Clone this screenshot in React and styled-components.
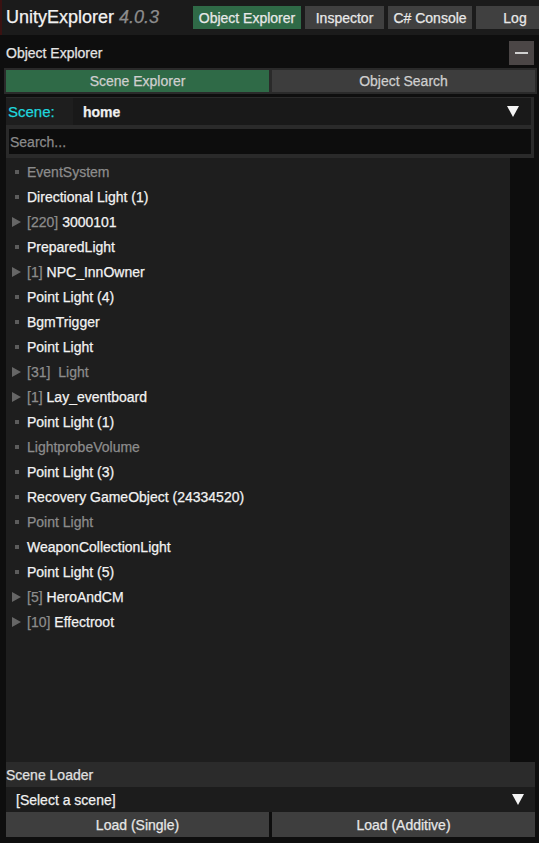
import React from "react"
import styled, { createGlobalStyle } from "styled-components"

const Global = createGlobalStyle`
  html, body {
    margin: 0;
    padding: 0;
    background: #0d0d0d;
  }
  * {
    box-sizing: border-box;
  }
`

const Window = styled.div`
  width: 539px;
  height: 843px;
  background: #0e0e0e;
  display: flex;
  flex-direction: column;
  overflow: hidden;
  font-family: "Liberation Sans", Arial, sans-serif;
  font-size: 14px;
  color: #e6e6e6;
  -webkit-text-stroke: 0.25px;
`

const TitleBar = styled.div`
  height: 35px;
  flex: none;
  display: flex;
  align-items: center;
  background: #1b1b1b;
  border-left: 2px solid #3a1212;
  padding-left: 4px;
`

const Title = styled.div`
  font-size: 18px;
  color: #f2f2f2;
  flex: 1;
  white-space: nowrap;
  .version {
    font-style: italic;
    color: #8c8c8c;
    margin-left: 5px;
  }
`

const NavButtons = styled.div`
  display: flex;
  gap: 4px;
  margin-right: -15px;
`

const NavButton = styled.div`
  height: 23px;
  width: ${p => p.$w}px;
  background: ${p => (p.$active ? "#2f6a47" : "#404040")};
  color: #e8e8e8;
  display: flex;
  align-items: center;
  justify-content: center;
  white-space: nowrap;
`

const Body = styled.div`
  flex: 1;
  display: flex;
  flex-direction: column;
  padding: 0 5px 6px 6px;
  min-height: 0;
`

const PanelHeader = styled.div`
  height: 33px;
  flex: none;
  display: flex;
  align-items: center;
  justify-content: space-between;
  color: #e4e4e4;
  padding-top: 2px;
`

const MinButton = styled.div`
  width: 25px;
  height: 24px;
  background: #4b4646;
  display: flex;
  align-items: center;
  justify-content: center;
  &::after {
    content: "";
    width: 13px;
    height: 2px;
    background: #d0d0d0;
  }
`

const Tabs = styled.div`
  height: 26px;
  flex: none;
  display: flex;
  gap: 3px;
  background: #2a2a2a;
  padding: 2px;
  margin: 0 -3px 0 -2px;
`

const Tab = styled.div`
  flex: 1;
  background: ${p => (p.$active ? "#2f6a47" : "#3d3d3d")};
  color: #cfcfcf;
  display: flex;
  align-items: center;
  justify-content: center;
`

const SceneBox = styled.div`
  margin-top: 3px;
  flex: none;
  background: #2a2a2a;
  padding: 1px 3px 4px 0;
`

const SceneRow = styled.div`
  height: 27px;
  display: flex;
  background: #1e1e1e;
`

const SceneLabel = styled.div`
  width: 67px;
  padding-left: 2px;
  color: #1fd6de;
  display: flex;
  align-items: center;
  font-size: 15px;
`

const Dropdown = styled.div`
  flex: 1;
  display: flex;
  align-items: center;
  justify-content: space-between;
  background: ${p => p.$bg || "#191919"};
  padding: 0 ${p => p.$pr || 12}px 0 ${p => p.$pl || 10}px;
  color: #f0f0f0;
  font-weight: ${p => (p.$bold ? "bold" : "normal")};
`

const DownArrow = styled.span`
  width: 0;
  height: 0;
  border-left: 6px solid transparent;
  border-right: 6px solid transparent;
  border-top: 11px solid #f4f4f4;
`

const SearchInput = styled.input`
  display: block;
  width: calc(100% - 3px);
  margin: 4px 0 0 3px;
  height: 25px;
  border: none;
  outline: none;
  background: #0d0d0d;
  color: #ddd;
  font-family: inherit;
  font-size: 14px;
  padding: 0 1px;
  &::placeholder {
    color: #8a8a8a;
  }
`

const ListArea = styled.div`
  flex: 1;
  display: flex;
  min-height: 0;
  margin-right: -1px;
`

const List = styled.div`
  flex: 1;
  background: #1e1e1e;
  padding-top: 1px;
  overflow: hidden;
`

const Scrollbar = styled.div`
  width: 25px;
  background: #0d0d0d;
`

const Row = styled.div`
  height: 25px;
  display: flex;
  align-items: center;
  white-space: nowrap;
  color: ${p => (p.$inactive ? "#8c8c8c" : "#f2f2f2")};
`

const Marker = styled.span`
  width: 21px;
  flex: none;
  display: flex;
  align-items: center;
  justify-content: ${p => (p.$arrow ? "flex-start" : "center")};
  padding-left: ${p => (p.$arrow ? "6px" : "0")};
  &::before {
    content: "";
    ${p =>
      p.$arrow
        ? `border-top: 5px solid transparent;
           border-bottom: 5px solid transparent;
           border-left: 9px solid #666;`
        : `width: 4px; height: 4px; background: #5c5c5c; margin-left: 1px;`}
  }
`

const Count = styled.span`
  color: #8c8c8c;
  margin-right: 4px;
`

const LoaderHeader = styled.div`
  height: 25px;
  flex: none;
  background: #2b2b2b;
  display: flex;
  align-items: center;
  color: #e0e0e0;
  margin-right: -1px;
`

const LoaderSelect = styled.div`
  height: 25px;
  flex: none;
  display: flex;
  margin-right: -1px;
`

const LoadButtons = styled.div`
  height: 25px;
  flex: none;
  display: flex;
  gap: 3px;
  margin-right: -1px;
`

const LoadButton = styled.div`
  flex: 1;
  background: #3e3e3e;
  color: #e6e6e6;
  display: flex;
  align-items: center;
  justify-content: center;
`

const items = [
  { name: "EventSystem", inactive: true },
  { name: "Directional Light (1)" },
  { name: "3000101", count: 220 },
  { name: "PreparedLight" },
  { name: "NPC_InnOwner", count: 1 },
  { name: "Point Light (4)" },
  { name: "BgmTrigger" },
  { name: "Point Light" },
  { name: "\u00a0Light", count: 31, inactive: true },
  { name: "Lay_eventboard", count: 1 },
  { name: "Point Light (1)" },
  { name: "LightprobeVolume", inactive: true },
  { name: "Point Light (3)" },
  { name: "Recovery GameObject (24334520)" },
  { name: "Point Light", inactive: true },
  { name: "WeaponCollectionLight" },
  { name: "Point Light (5)" },
  { name: "HeroAndCM", count: 5 },
  { name: "Effectroot", count: 10 },
]

export default function App() {
  return (
    <Window>
      <Global />
      <TitleBar>
        <Title>
          UnityExplorer<span className="version">4.0.3</span>
        </Title>
        <NavButtons>
          <NavButton $w={108} $active>Object Explorer</NavButton>
          <NavButton $w={79}>Inspector</NavButton>
          <NavButton $w={84}>C# Console</NavButton>
          <NavButton $w={78}>Log</NavButton>
        </NavButtons>
      </TitleBar>
      <Body>
        <PanelHeader>
          <span>Object Explorer</span>
          <MinButton />
        </PanelHeader>
        <Tabs>
          <Tab $active>Scene Explorer</Tab>
          <Tab>Object Search</Tab>
        </Tabs>
        <SceneBox>
          <SceneRow>
            <SceneLabel>Scene:</SceneLabel>
            <Dropdown $bold>
              <span>home</span>
              <DownArrow />
            </Dropdown>
          </SceneRow>
          <SearchInput placeholder="Search..." />
        </SceneBox>
        <ListArea>
          <List>
            {items.map((it, i) => (
              <Row key={i} $inactive={it.inactive}>
                <Marker $arrow={it.count !== undefined} />
                {it.count !== undefined && <Count>[{it.count}]</Count>}
                <span>{it.name}</span>
              </Row>
            ))}
          </List>
          <Scrollbar />
        </ListArea>
        <LoaderHeader>Scene Loader</LoaderHeader>
        <LoaderSelect>
          <Dropdown $bg="#1c1c1c" $pl={10} $pr={11}>
            <span>[Select a scene]</span>
            <DownArrow />
          </Dropdown>
        </LoaderSelect>
        <LoadButtons>
          <LoadButton>Load (Single)</LoadButton>
          <LoadButton>Load (Additive)</LoadButton>
        </LoadButtons>
      </Body>
    </Window>
  )
}
